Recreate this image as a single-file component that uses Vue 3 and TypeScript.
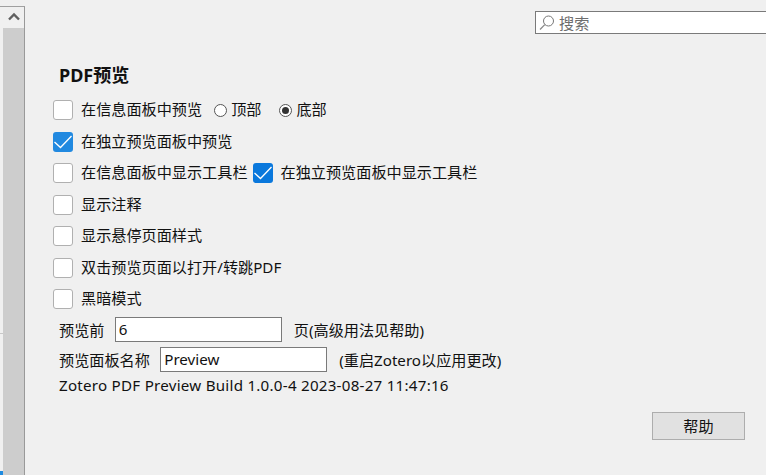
<script setup lang="ts">
const plainRows = ['显示注释', '显示悬停页面样式', '双击预览页面以打开/转跳PDF', '黑暗模式']
</script>

<template>
  <div class="window">
    <aside class="rail">
      <div class="arrow">
        <svg width="14" height="9" viewBox="0 0 14 9"><path d="M2 7.5 L7 2.5 L12 7.5" fill="none" stroke="#606060" stroke-width="2.4" /></svg>
      </div>
      <div class="track-wrap">
        <div class="edge">
          <span class="edge-line"></span>
          <span class="edge-blue"></span>
        </div>
        <div class="track"></div>
      </div>
    </aside>
    <main class="content">
      <div class="search-row">
        <div class="search">
          <svg width="17" height="17" viewBox="0 0 17 17"><circle cx="10.5" cy="7" r="5" fill="none" stroke="#777" stroke-width="1" /><path d="M6.8 10.6 L2 15.5" stroke="#888" stroke-width="1.3" /></svg>
          <span>搜索</span>
        </div>
      </div>
      <h1 class="title">PDF预览</h1>
      <div class="row first">
        <span class="box"></span>
        <span class="lbl">在信息面板中预览</span>
        <span class="radio r1"></span><span class="lbl rl">顶部</span>
        <span class="radio on r2"></span><span class="lbl rl">底部</span>
      </div>
      <div class="row">
        <span class="box checked soft">
          <svg width="20" height="20" viewBox="0 0 20 20"><path d="M1.5 10 L7.5 15.5 L18.5 4" fill="none" stroke="#fff" stroke-width="1.3" /></svg>
        </span>
        <span class="lbl">在独立预览面板中预览</span>
      </div>
      <div class="row">
        <span class="box"></span>
        <span class="lbl">在信息面板中显示工具栏</span>
        <span class="box checked second">
          <svg width="20" height="20" viewBox="0 0 20 20"><path d="M1.5 10 L7.5 15.5 L18.5 4" fill="none" stroke="#fff" stroke-width="1.3" /></svg>
        </span>
        <span class="lbl">在独立预览面板中显示工具栏</span>
      </div>
      <div v-for="p in plainRows" :key="p" class="row">
        <span class="box"></span>
        <span class="lbl">{{ p }}</span>
      </div>
      <div class="field f1">
        <span>预览前</span>
        <input class="inp" value="6" />
        <span>页(高级用法见帮助)</span>
      </div>
      <div class="field f2">
        <span>预览面板名称</span>
        <input class="inp" value="Preview" />
        <span>(重启Zotero以应用更改)</span>
      </div>
      <div class="build">Zotero PDF Preview Build 1.0.0-4 2023-08-27 11:47:16</div>
      <div class="foot"><button class="help">帮助</button></div>
    </main>
  </div>
</template>

<style>
html, body { margin: 0; background: #f0f0f0; }
</style>

<style scoped>
.window {
  width: 766px; height: 475px; display: flex; overflow: hidden; background: #f0f0f0;
  font-family: "Noto Sans", "Noto Sans CJK SC", sans-serif; font-size: 15.15px; color: #111;
}
.rail { width: 25px; flex: none; margin-top: 6px; border-top: 1px solid #a0a0a0; border-right: 1px solid #999; box-sizing: border-box; display: flex; flex-direction: column; }
.arrow { height: 21px; display: flex; align-items: center; justify-content: center; padding-left: 3px; padding-bottom: 2px; box-sizing: border-box; }
.track-wrap { flex: 1; display: flex; }
.edge { width: 3px; flex: none; position: relative; }
.edge-line { position: absolute; left: 0; right: 0; top: 305px; height: 1px; background: #c8c8c8; }
.edge-blue { position: absolute; left: 0; bottom: 0; width: 3px; height: 4px; background: #1f8be0; }
.track { flex: 1; background: #cdcdcd; }
.content { flex: 1; min-width: 0; padding-left: 28px; }
.search-row { display: flex; justify-content: flex-end; padding-top: 11px; height: 23px; }
.search { width: 231px; height: 23px; box-sizing: border-box; border: 1px solid #7a7a7a; border-right: none; background: #fff; display: flex; align-items: center; gap: 4px; padding-left: 2px; color: #6d6d6d; }
.search span { padding-bottom: 2px; }
.title { margin: 29px 0 0 6px; height: 24px; font-size: 18px; line-height: 24px; font-weight: 700; color: #111; }
.row { display: flex; align-items: center; height: 20px; margin-top: 11.5px; }
.row.first { margin-top: 13px; }
.box { width: 20px; height: 20px; box-sizing: border-box; flex: none; border: 1px solid #b0b0b0; border-radius: 3px; background: #fff; }
.box.checked { background: #0a78dc; border: none; }
.box.soft { background: #2189e0; }
.box.checked svg { display: block; }
.box.second { margin-left: 5px; }
.lbl { margin-left: 8px; line-height: 20px; padding-bottom: 2px; white-space: nowrap; }
.radio { width: 13px; height: 13px; box-sizing: border-box; flex: none; border: 1px solid #555; border-radius: 50%; background: #fff; position: relative; }
.r1 { margin-left: 12px; }
.r2 { margin-left: 18px; }
.radio.on::after { content: ""; position: absolute; inset: 2px; background: #333; border-radius: 50%; }
.rl { margin-left: 4px; }
.field { display: flex; align-items: center; height: 25px; margin-left: 6px; white-space: nowrap; }
.field span { padding-bottom: 2px; }
.f1 { margin-top: 8px; }
.f2 { margin-top: 5px; }
.inp { width: 167px; height: 25px; box-sizing: border-box; border: 1px solid #7a7a7a; background: #fff; padding: 0 3px 2px; margin: 0 12px 0 10.4px; font: inherit; color: #111; outline: none; }
.build { margin: 3px 0 0 6px; height: 20px; line-height: 20px; letter-spacing: 0.25px; white-space: nowrap; }
.foot { display: flex; justify-content: flex-end; margin-top: 17px; padding-right: 21px; }
.help { width: 93px; height: 28px; box-sizing: border-box; border: 1px solid #adadad; background: #e1e1e1; font: inherit; color: #111; padding: 0 0 3px; }
</style>
